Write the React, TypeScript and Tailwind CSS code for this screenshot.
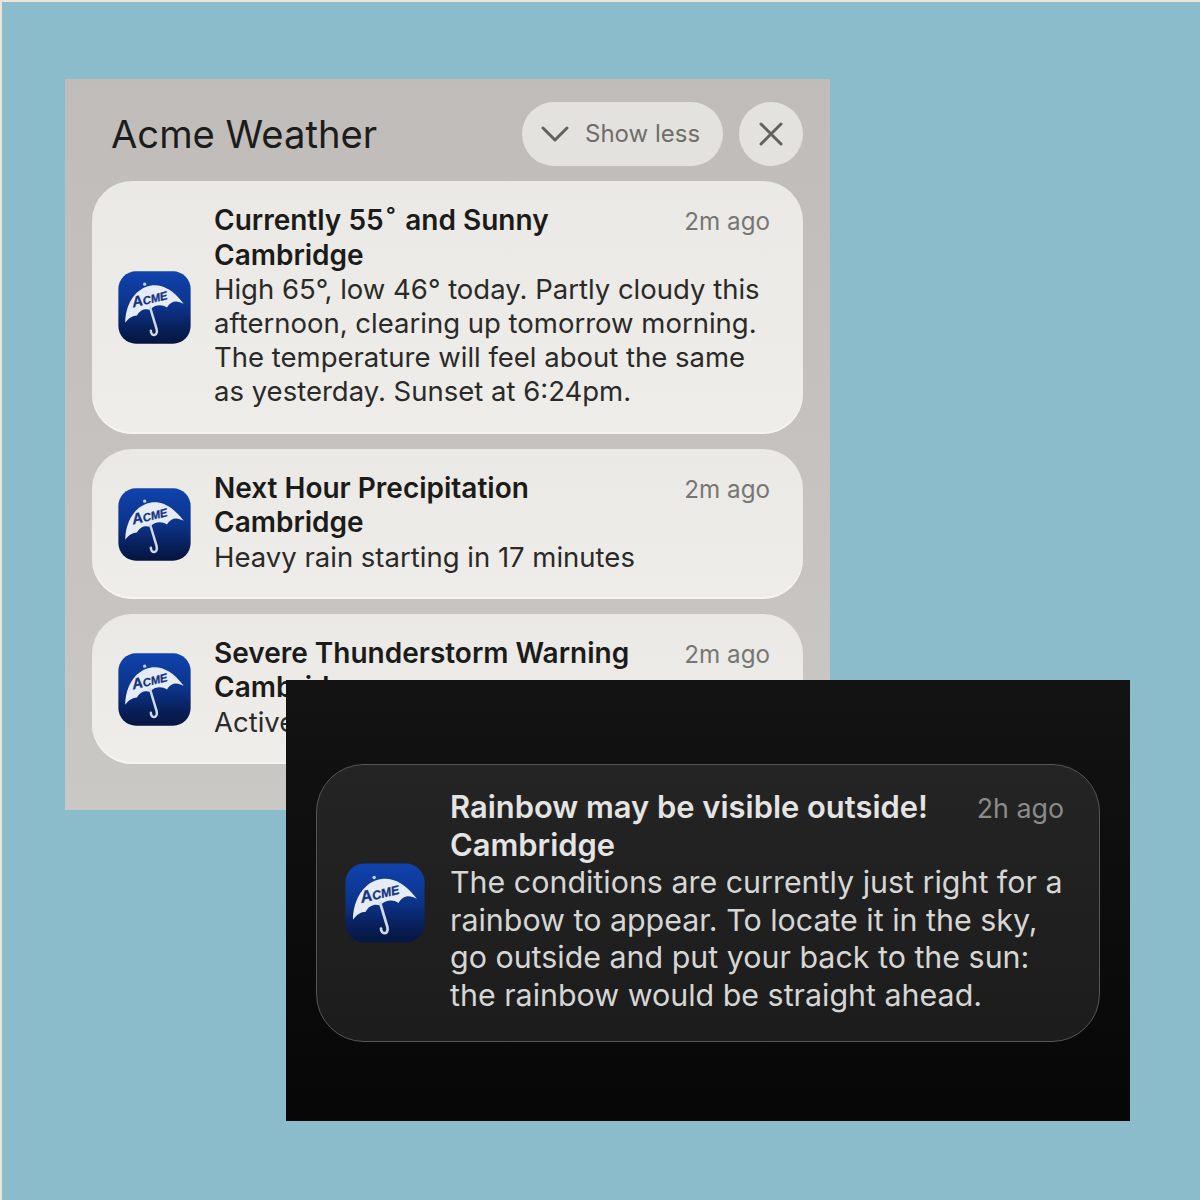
import React from "react";

function AppIcon({ id, className }: { id: string; className: string }) {
  return (
    <svg viewBox="0 0 100 100" className={className}>
      <defs>
        <linearGradient id={id} x1="0" y1="0" x2="0" y2="1">
          <stop offset="0" stopColor="#1043ad" />
          <stop offset="0.5" stopColor="#0c3389" />
          <stop offset="0.8" stopColor="#081f58" />
          <stop offset="1" stopColor="#061540" />
        </linearGradient>
      </defs>
      <rect x="0.5" y="0.5" width="99" height="99" rx="24" fill={`url(#${id})`} />
      <circle cx="36.5" cy="18" r="2.2" fill="#c4d2ec" />
      <path
        d="M10 71 C10 50 20 29 38 22 C54 16 72 21 90 45 C81 40 73 40 67 50 C60 45 50 46 44 53 C37 51 30 53 26 61 C20 61 14 65 10 71 Z"
        fill="#e6ecf6"
      />
      <path
        d="M44 50 L53 80 C55 90 45 90 45 82"
        fill="none"
        stroke="#cfd9ec"
        strokeWidth="3.4"
        strokeLinecap="round"
      />
      <text
        x="21"
        y="50"
        transform="rotate(-14 21 50)"
        fontFamily="'Liberation Sans', sans-serif"
        fontWeight="700"
        fontStyle="italic"
        fontSize="15.5"
        fill="#12337f"
        stroke="#12337f"
        strokeWidth="0.4"
      >
        <tspan fontSize="20.5">A</tspan>CME
      </text>
    </svg>
  );
}

function LightCard({
  id,
  title,
  body,
  pad,
}: {
  id: string;
  title: React.ReactNode;
  body: string[];
  pad: string;
}) {
  return (
    <div
      className={`flex items-center rounded-[40px] bg-gradient-to-b from-[#ebe9e5] to-[#efede9] shadow-[inset_0_-2px_0_#f5f4f0] pl-[26px] pr-[33px] ${pad}`}
    >
      <AppIcon id={id} className="w-[73px] h-[73px] shrink-0" />
      <div className="ml-[23px] -mt-[3px] flex-1 min-w-0 text-[27.5px] leading-[34.2px] text-[#2a2a28]">
        <div className="flex justify-between h-[34.2px]">
          <span className="text-[28px] font-semibold text-[#1b1b1a] whitespace-nowrap">{title}</span>
          <span className="h-[34px] leading-[38px] text-[24.2px] text-[#777672] whitespace-nowrap">2m ago</span>
        </div>
        <div className="text-[28px] font-semibold text-[#1b1b1a]">Cambridge</div>
        {body.map((l) => (
          <div key={l} className="whitespace-nowrap">
            {l}
          </div>
        ))}
      </div>
    </div>
  );
}

export default function App() {
  return (
    <div
      className="relative w-[1200px] h-[1200px] overflow-hidden bg-[#8abccb] border-t-2 border-l-2 border-[#ece6da]"
      style={{ fontFamily: "Inter, 'Noto Sans', sans-serif" }}
    >
      <div className="absolute left-[63px] top-[77px] w-[765px] h-[731px] bg-gradient-to-b from-[#c0bcb9] to-[#cac8c4] px-[27px] overflow-hidden">
        <div className="flex items-center h-[102px] pt-[23px] pb-[15px]">
          <div className="ml-[19px] mt-[2px] flex-1 text-[38.2px] text-[#1c1c1b] whitespace-nowrap">Acme Weather</div>
          <div className="flex items-center h-[64px] w-[201px] rounded-full bg-[#e3e2de] pl-[19px] text-[24px] text-[#6f6e6a]">
            <svg viewBox="0 0 28 16" className="w-[28px] h-[16px]" fill="none" stroke="#62615d" strokeWidth="3" strokeLinecap="round" strokeLinejoin="round">
              <path d="M2 2 L14 14 L26 2" />
            </svg>
            <span className="ml-[16px] whitespace-nowrap">Show less</span>
          </div>
          <div className="ml-[16px] flex items-center justify-center h-[64px] w-[64px] rounded-full bg-[#e3e2de]">
            <svg viewBox="0 0 24 24" className="w-[24px] h-[24px]" fill="none" stroke="#62615d" strokeWidth="3" strokeLinecap="round">
              <path d="M2 2 L22 22 M22 2 L2 22" />
            </svg>
          </div>
        </div>
        <div className="flex flex-col gap-[15px]">
          <LightCard
            id="a1"
            pad="h-[253px]"
            title={
              <>
                Currently 55<span className="mx-[2.5px]">˚</span> and Sunny
              </>
            }
            body={[
              "High 65°, low 46° today. Partly cloudy this",
              "afternoon, clearing up tomorrow morning.",
              "The temperature will feel about the same",
              "as yesterday. Sunset at 6:24pm.",
            ]}
          />
          <LightCard id="a2" pad="h-[150px]" title="Next Hour Precipitation" body={["Heavy rain starting in 17 minutes"]} />
          <LightCard id="a3" pad="h-[150px]" title="Severe Thunderstorm Warning" body={["Active"]} />
        </div>
      </div>
      <div className="absolute left-[284px] top-[678px] w-[844px] h-[441px] bg-gradient-to-b from-[#131313] to-[#070707] pl-[30px] pr-[30px] pt-[84px]">
        <div className="flex items-center h-[278px] rounded-[48px] bg-gradient-to-b from-[#242424] to-[#1c1c1c] border-[1.5px] border-[#565656] pl-[28px] pr-[35px]">
          <AppIcon id="b1" className="w-[80px] h-[80px] shrink-0" />
          <div className="ml-[25px] -mt-[3px] flex-1 min-w-0 text-[30.4px] leading-[37.8px] text-[#d6d6d4]">
            <div className="flex justify-between h-[37.8px]">
              <span className="text-[30.9px] font-semibold text-[#e4e4e2] whitespace-nowrap">Rainbow may be visible outside!</span>
              <span className="h-[37px] leading-[41px] text-[26.8px] text-[#8b8b89] whitespace-nowrap">2h ago</span>
            </div>
            <div className="text-[30.9px] font-semibold text-[#e4e4e2]">Cambridge</div>
            <div className="whitespace-nowrap">The conditions are currently just right for a</div>
            <div className="whitespace-nowrap">rainbow to appear. To locate it in the sky,</div>
            <div className="whitespace-nowrap">go outside and put your back to the sun:</div>
            <div className="whitespace-nowrap">the rainbow would be straight ahead.</div>
          </div>
        </div>
      </div>
    </div>
  );
}
